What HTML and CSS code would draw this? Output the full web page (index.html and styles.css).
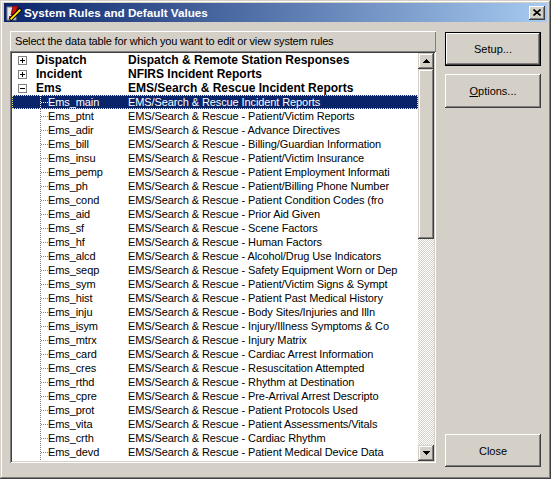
FILE: index.html
```html
<!DOCTYPE html>
<html>
<head>
<meta charset="utf-8">
<title>System Rules and Default Values</title>
<link rel="stylesheet" href="styles.css">
</head>
<body>
<div class="window">
  <div class="titlebar">
    <svg class="title-icon" width="16" height="16" viewBox="0 0 16 16">
      <rect x="1" y="2" width="9" height="13" fill="#e8e8e8" stroke="#808080" stroke-width="1"/>
      <polygon points="7,1 12,1 9,10 5,10" fill="#d01010" stroke="#600" stroke-width="0.8"/>
      <rect x="3" y="11" width="3" height="3" fill="#d01010"/>
      <line x1="4" y1="15" x2="15" y2="4" stroke="#000" stroke-width="4"/>
      <line x1="4.6" y1="14.4" x2="14.4" y2="4.6" stroke="#ffe600" stroke-width="2"/>
    </svg>
    <span class="title-text">System Rules and Default Values</span>
    <div class="close-btn">
      <svg width="8" height="7" viewBox="0 0 8 7"><path d="M0.5 0.5 L7.5 6.5 M7.5 0.5 L0.5 6.5" stroke="#000" stroke-width="1.6"/></svg>
    </div>
  </div>
  <div class="client">
    <div class="left">
      <div class="header">Select the data table for which you want to edit or view system rules</div>
      <div class="list">
        <div class="rows">
          <div class="row top"><div class="c1"><svg class="box" width="9" height="9" viewBox="0 0 9 9"><rect x="0.5" y="0.5" width="8" height="8" fill="#fff" stroke="#808080"/><path d="M2 4.5h5M4.5 2v5" stroke="#000"/></svg><span>Dispatch</span></div><div class="c2">Dispatch &amp; Remote Station Responses</div></div>
          <div class="row top"><div class="c1"><svg class="box" width="9" height="9" viewBox="0 0 9 9"><rect x="0.5" y="0.5" width="8" height="8" fill="#fff" stroke="#808080"/><path d="M2 4.5h5M4.5 2v5" stroke="#000"/></svg><span>Incident</span></div><div class="c2">NFIRS Incident Reports</div></div>
          <div class="row top"><div class="c1"><svg class="box" width="9" height="9" viewBox="0 0 9 9"><rect x="0.5" y="0.5" width="8" height="8" fill="#fff" stroke="#808080"/><path d="M2 4.5h5" stroke="#000"/></svg><span>Ems</span></div><div class="c2">EMS/Search &amp; Rescue Incident Reports</div></div>
          <div class="row child selected"><div class="c1"><i class="conn"></i><span>Ems_main</span></div><div class="c2">EMS/Search &amp; Rescue Incident Reports</div></div>
          <div class="row child"><div class="c1"><i class="conn"></i><span>Ems_ptnt</span></div><div class="c2">EMS/Search &amp; Rescue - Patient/Victim Reports</div></div>
          <div class="row child"><div class="c1"><i class="conn"></i><span>Ems_adir</span></div><div class="c2">EMS/Search &amp; Rescue - Advance Directives</div></div>
          <div class="row child"><div class="c1"><i class="conn"></i><span>Ems_bill</span></div><div class="c2">EMS/Search &amp; Rescue - Billing/Guardian Information</div></div>
          <div class="row child"><div class="c1"><i class="conn"></i><span>Ems_insu</span></div><div class="c2">EMS/Search &amp; Rescue - Patient/Victim Insurance</div></div>
          <div class="row child"><div class="c1"><i class="conn"></i><span>Ems_pemp</span></div><div class="c2">EMS/Search &amp; Rescue - Patient Employment Informati</div></div>
          <div class="row child"><div class="c1"><i class="conn"></i><span>Ems_ph</span></div><div class="c2">EMS/Search &amp; Rescue - Patient/Billing Phone Number</div></div>
          <div class="row child"><div class="c1"><i class="conn"></i><span>Ems_cond</span></div><div class="c2">EMS/Search &amp; Rescue - Patient Condition Codes (fro</div></div>
          <div class="row child"><div class="c1"><i class="conn"></i><span>Ems_aid</span></div><div class="c2">EMS/Search &amp; Rescue - Prior Aid Given</div></div>
          <div class="row child"><div class="c1"><i class="conn"></i><span>Ems_sf</span></div><div class="c2">EMS/Search &amp; Rescue - Scene Factors</div></div>
          <div class="row child"><div class="c1"><i class="conn"></i><span>Ems_hf</span></div><div class="c2">EMS/Search &amp; Rescue - Human Factors</div></div>
          <div class="row child"><div class="c1"><i class="conn"></i><span>Ems_alcd</span></div><div class="c2">EMS/Search &amp; Rescue - Alcohol/Drug Use Indicators</div></div>
          <div class="row child"><div class="c1"><i class="conn"></i><span>Ems_seqp</span></div><div class="c2">EMS/Search &amp; Rescue - Safety Equipment Worn or Dep</div></div>
          <div class="row child"><div class="c1"><i class="conn"></i><span>Ems_sym</span></div><div class="c2">EMS/Search &amp; Rescue - Patient/Victim Signs &amp; Sympt</div></div>
          <div class="row child"><div class="c1"><i class="conn"></i><span>Ems_hist</span></div><div class="c2">EMS/Search &amp; Rescue - Patient Past Medical History</div></div>
          <div class="row child"><div class="c1"><i class="conn"></i><span>Ems_inju</span></div><div class="c2">EMS/Search &amp; Rescue - Body Sites/Injuries and Illn</div></div>
          <div class="row child"><div class="c1"><i class="conn"></i><span>Ems_isym</span></div><div class="c2">EMS/Search &amp; Rescue - Injury/Illness Symptoms &amp; Co</div></div>
          <div class="row child"><div class="c1"><i class="conn"></i><span>Ems_mtrx</span></div><div class="c2">EMS/Search &amp; Rescue - Injury Matrix</div></div>
          <div class="row child"><div class="c1"><i class="conn"></i><span>Ems_card</span></div><div class="c2">EMS/Search &amp; Rescue - Cardiac Arrest Information</div></div>
          <div class="row child"><div class="c1"><i class="conn"></i><span>Ems_cres</span></div><div class="c2">EMS/Search &amp; Rescue - Resuscitation Attempted</div></div>
          <div class="row child"><div class="c1"><i class="conn"></i><span>Ems_rthd</span></div><div class="c2">EMS/Search &amp; Rescue - Rhythm at Destination</div></div>
          <div class="row child"><div class="c1"><i class="conn"></i><span>Ems_cpre</span></div><div class="c2">EMS/Search &amp; Rescue - Pre-Arrival Arrest Descripto</div></div>
          <div class="row child"><div class="c1"><i class="conn"></i><span>Ems_prot</span></div><div class="c2">EMS/Search &amp; Rescue - Patient Protocols Used</div></div>
          <div class="row child"><div class="c1"><i class="conn"></i><span>Ems_vita</span></div><div class="c2">EMS/Search &amp; Rescue - Patient Assessments/Vitals</div></div>
          <div class="row child"><div class="c1"><i class="conn"></i><span>Ems_crth</span></div><div class="c2">EMS/Search &amp; Rescue - Cardiac Rhythm</div></div>
          <div class="row child"><div class="c1"><i class="conn"></i><span>Ems_devd</span></div><div class="c2">EMS/Search &amp; Rescue - Patient Medical Device Data</div></div>
          <div class="row child"><div class="c1"><i class="conn"></i></div></div>
        </div>
        <div class="scrollbar">
          <div class="sb-btn"><svg width="7" height="4" viewBox="0 0 7 4"><path d="M3 0h1v1h1v1h1v1h1v1H0V3h1V2h1V1h1z" fill="#000"/></svg></div>
          <div class="sb-thumb"></div>
          <div class="sb-track"></div>
          <div class="sb-btn"><svg width="7" height="4" viewBox="0 0 7 4"><path d="M0 0h7v1H6v1H5v1H4v1H3V3H2V2H1V1H0z" fill="#000"/></svg></div>
        </div>
      </div>
    </div>
    <div class="right">
      <div class="btn default"><span class="btn-inner">Setup...</span></div>
      <div class="btn"><span class="btn-inner"><u>O</u>ptions...</span></div>
      <div class="btn close"><span class="btn-inner">Close</span></div>
    </div>
  </div>
</div>
</body>
</html>
```

FILE: styles.css
```css
* { box-sizing: border-box; }
html, body { margin: 0; padding: 0; }
body {
  width: 551px;
  height: 479px;
  overflow: hidden;
  background: #D4D0C8;
  font-family: "Liberation Sans", Arial, sans-serif;
  font-size: 11px;
  color: #000;
}
.window {
  width: 551px;
  height: 479px;
  background: #D4D0C8;
  padding: 3px 4px 4px 4px;
  display: flex;
  flex-direction: column;
  box-shadow: inset -1px -1px #404040, inset 1px 1px #D4D0C8, inset -2px -2px #808080, inset 2px 2px #fff;
}
.titlebar {
  height: 19px;
  flex: none;
  display: flex;
  align-items: center;
  background: linear-gradient(to right, #0A246A, #A6CAF0);
  padding: 0 2px 0 2px;
  color: #fff;
}
.title-icon { flex: none; margin-right: 2px; }
.title-text {
  flex: 1;
  font-weight: bold;
  font-size: 11.7px;
  white-space: nowrap;
}
.close-btn {
  width: 16px;
  height: 14px;
  background: #D4D0C8;
  display: flex;
  align-items: center;
  justify-content: center;
  box-shadow: inset -1px -1px #404040, inset 1px 1px #fff, inset -2px -2px #808080;
}
.client {
  flex: 1;
  display: flex;
  padding: 9px 6px 8px 6px;
}
.left {
  width: 426px;
  flex: none;
  display: flex;
  flex-direction: column;
}
.header {
  height: 20px;
  padding-left: 5px;
  display: flex;
  align-items: center;
  white-space: nowrap;
  overflow: hidden;
  letter-spacing: -0.17px;
  box-shadow: inset 1px 1px #fff, inset -1px 0 #808080;
}
.list {
  height: 412px;
  display: flex;
  background: #fff;
  padding: 2px;
  box-shadow: inset 1px 1px #808080, inset -1px -1px #fff, inset 2px 2px #404040, inset -2px -2px #D4D0C8;
}
.rows {
  flex: 1;
  overflow: hidden;
  min-width: 0;
}
.row {
  height: 14px;
  line-height: 14px;
  display: flex;
  align-items: center;
  white-space: nowrap;
  letter-spacing: -0.1px;
}
.c1 {
  width: 116px;
  flex: none;
  height: 14px;
  display: flex;
  align-items: center;
}
.c2 {
  flex: 1;
  overflow: hidden;
  min-width: 0;
}
.top { font-weight: bold; font-size: 12px; letter-spacing: 0; }
.top .c1 { padding-left: 6px; }
.box { flex: none; margin-right: 9px; }
.child .c1 { padding-left: 28px; }
.conn {
  width: 8px;
  height: 14px;
  flex: none;
  background-image:
    repeating-linear-gradient(to bottom, #808080 0 1px, transparent 1px 2px),
    repeating-linear-gradient(to right, #808080 0 1px, transparent 1px 2px);
  background-size: 1px 14px, 7px 1px;
  background-position: 0 0, 1px 7px;
  background-repeat: no-repeat;
}
.selected {
  background: #0A246A;
  color: #fff;
  outline: 1px dotted #f0f080;
  outline-offset: -1px;
}
.selected .conn {
  background-image:
    repeating-linear-gradient(to bottom, #fff 0 1px, transparent 1px 2px),
    repeating-linear-gradient(to right, #fff 0 1px, transparent 1px 2px);
}
.scrollbar {
  width: 16px;
  flex: none;
  display: flex;
  flex-direction: column;
}
.sb-btn, .sb-thumb {
  background: #D4D0C8;
  box-shadow: inset -1px -1px #404040, inset 1px 1px #D4D0C8, inset -2px -2px #808080, inset 2px 2px #fff;
}
.sb-btn {
  height: 16px;
  flex: none;
  display: flex;
  align-items: center;
  justify-content: center;
}
.sb-thumb { height: 170px; flex: none; }
.sb-track {
  flex: 1;
  background-color: #D4D0C8;
  background-image: conic-gradient(#fff 25%, #D4D0C8 0 50%, #fff 0 75%, #D4D0C8 0);
  background-size: 2px 2px;
}
.right {
  width: 96px;
  flex: none;
  margin-left: 9px;
  display: flex;
  flex-direction: column;
}
.btn {
  height: 34px;
  flex: none;
  display: flex;
  align-items: center;
  justify-content: center;
  background: #D4D0C8;
  box-shadow: inset -1px -1px #404040, inset 1px 1px #fff, inset -2px -2px #808080;
}
.btn + .btn { margin-top: 8px; }
.btn.default {
  margin-top: 1px;
  box-shadow: inset 0 0 0 1px #000, inset -2px -2px #404040, inset 2px 2px #fff, inset -3px -3px #808080;
}
.btn.close { margin-top: auto; height: 33px; }
.btn-inner { white-space: nowrap; }
```
